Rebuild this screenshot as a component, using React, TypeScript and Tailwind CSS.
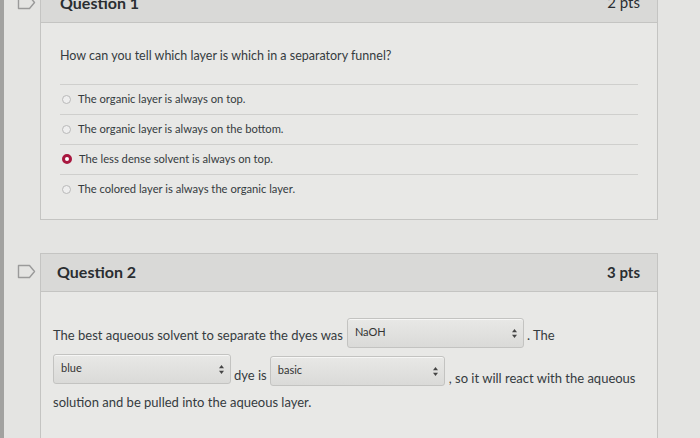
import React from "react";

const font = { fontFamily: "Lato, 'Open Sans', Arial, sans-serif" };

function Flag() {
  return (
    <svg width="19" height="15" viewBox="0 0 19 15" fill="none">
      <path d="M1.5 1.5 H12.5 L17.5 7.5 L12.5 13.5 H1.5 Z" stroke="#9a9a9a" strokeWidth="1.4" strokeLinejoin="round" />
    </svg>
  );
}

function Radio({ checked }: { checked?: boolean }) {
  if (checked) {
    return <span className="inline-block w-[10px] h-[10px] rounded-full border-[3px] border-[#a8173f] bg-white shrink-0" />;
  }
  return <span className="inline-block w-[9px] h-[9px] rounded-full border border-[#b9b9b9] bg-[#eeeeee] shrink-0" />;
}

function Select({ value, width }: { value: string; width: number }) {
  return (
    <div
      className="relative h-[30px] rounded-[3px] border border-[#c3c3c1] bg-gradient-to-b from-[#e8e8e6] to-[#dadad8] shrink-0 shadow-[inset_0_1px_0_rgba(255,255,255,0.6)]"
      style={{ width }}
    >
      <span className="absolute left-[7px] top-[5px] text-[11px] text-[#333]">{value}</span>
      <svg className="absolute right-[6px] top-[10px]" width="5" height="9" viewBox="0 0 5 9">
        <path d="M2.5 0 L5 3.3 H0 Z" fill="#444" />
        <path d="M2.5 9 L5 5.7 H0 Z" fill="#444" />
      </svg>
    </div>
  );
}

const options = [
  "The organic layer is always on top.",
  "The organic layer is always on the bottom.",
  "The less dense solvent is always on top.",
  "The colored layer is always the organic layer.",
];

export default function App() {
  return (
    <div className="w-[700px] h-[438px] overflow-hidden bg-[#e4e4e2] border-l-[4px] border-[#a2a2a0] text-[#353b40]" style={font}>
      {/* Question 1 */}
      <div className="flex mt-[-18px]">
        <div className="w-[36px] shrink-0 flex justify-end pr-[4px] pt-[13px]">
          <Flag />
        </div>
        <div className="w-[618px] border border-[#c4c4c2] bg-[#e8e8e6]">
          <div className="h-[40px] flex items-center justify-between pl-[19px] pr-[17px] bg-[#d9d9d7] border-b border-[#c4c4c2]">
            <span className="text-[16px] font-bold text-[#2a2e31]">Question 1</span>
            <span className="text-[15px] text-[#2a2e31]">2 pts</span>
          </div>
          <div className="px-[19px] pt-[24px] pb-[14px]">
            <p className="text-[12.5px] mb-[18px]">How can you tell which layer is which in a separatory funnel?</p>
            <div className="border-t border-[#cfcfcd]">
              {options.map((o, i) => (
                <div
                  key={o}
                  className={`h-[30px] flex items-center gap-[7px] pl-[2px] text-[11.2px] ${i < options.length - 1 ? "border-b border-[#cfcfcd]" : ""}`}
                >
                  <Radio checked={i === 2} />
                  <span>{o}</span>
                </div>
              ))}
            </div>
          </div>
        </div>
      </div>

      {/* Question 2 */}
      <div className="flex mt-[33px]">
        <div className="w-[36px] shrink-0 flex justify-end pr-[4px] pt-[11px]">
          <Flag />
        </div>
        <div className="w-[618px] border border-[#c4c4c2] bg-[#e8e8e6] h-[200px]">
          <div className="h-[38px] flex items-center justify-between pl-[16px] pr-[17px] bg-[#d9d9d7] border-b border-[#c4c4c2]">
            <span className="text-[16px] font-bold text-[#2a2e31]">Question 2</span>
            <span className="text-[15px] font-bold text-[#2a2e31]">3 pts</span>
          </div>
          <div className="pl-[12px] pt-[26px] text-[13px]">
            <div className="flex items-center h-[30px]">
              <span className="mt-[6px] mr-[4px]">The best aqueous solvent to separate the dyes was</span>
              <Select value="NaOH" width={177} />
              <span className="mt-[6px] ml-[3px]">. The</span>
            </div>
            <div className="flex items-start mt-[6px]">
              <Select value="blue" width={178} />
              <span className="mt-[12px] mx-[3px]">dye is</span>
              <div className="mt-[2px]">
                <Select value="basic" width={175} />
              </div>
              <span className="mt-[15px] ml-[4px]">, so it will react with the aqueous</span>
            </div>
            <p className="mt-[5px]">solution and be pulled into the aqueous layer.</p>
          </div>
        </div>
      </div>
    </div>
  );
}
